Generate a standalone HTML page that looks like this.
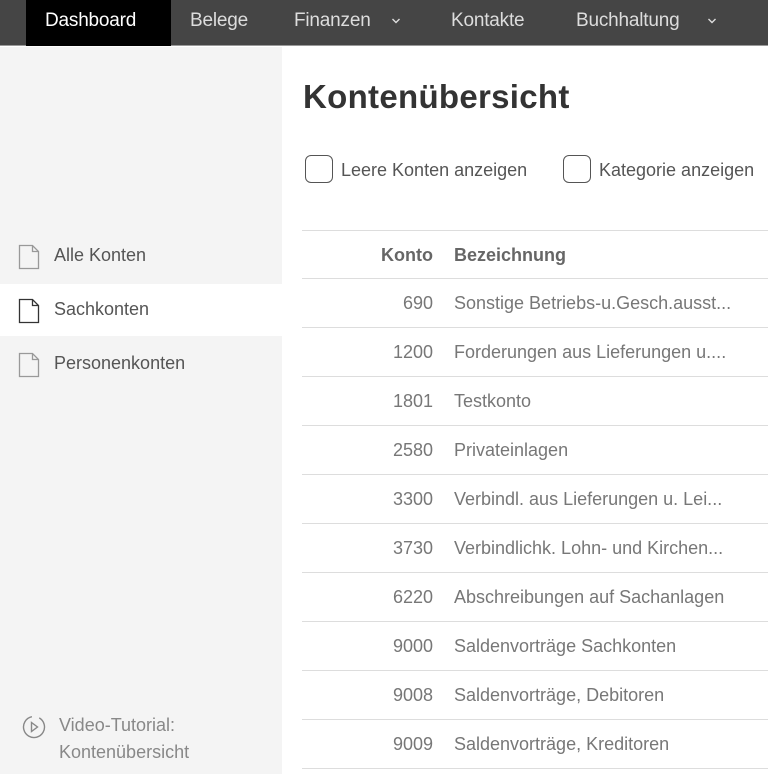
<!DOCTYPE html>
<html><head><meta charset="utf-8"><style>
*{margin:0;padding:0;box-sizing:border-box}
body{width:768px;height:774px;overflow:hidden;font-family:"Liberation Sans",sans-serif;background:#fff;position:relative;color:#555}
.nav{position:absolute;left:0;top:0;width:768px;height:46px;background:#454545;border-bottom:1px solid #999}
.nav span{position:absolute;top:10px;font-size:19px;color:#ddd;letter-spacing:-0.2px}
.nav .act{left:26px;top:0;width:145px;height:46px;background:#000;color:#fff;padding:10px 0 0 19px}
.nav svg{position:absolute;top:17px}
.side{position:absolute;left:0;top:47px;width:282px;height:727px;background:#f4f4f4}
.item{position:absolute;left:0;width:282px;height:52px;font-size:18px;color:#555}
.item svg{position:absolute;left:18px;top:14px}
.item span{position:absolute;left:54px;top:15px}
h1{position:absolute;left:303px;top:78px;font-size:33px;font-weight:bold;color:#333;letter-spacing:0.3px}
.cb{position:absolute;top:155px;width:28px;height:28px;border:1.5px solid #555;border-radius:6px}
.cbl{position:absolute;top:160px;font-size:18px;color:#555}
.line{position:absolute;left:302px;width:466px;height:1px;background:#ddd}
.row{position:absolute;left:302px;width:466px;font-size:18px;color:#777}
.row .k{position:absolute;right:335px;}
.row .b{position:absolute;left:152px;white-space:nowrap}
</style></head><body>
<div class="nav">
<span class="act">Dashboard</span>
<span style="left:190px">Belege</span>
<span style="left:294px">Finanzen</span>
<svg style="left:391px" width="10" height="8" viewBox="0 0 10 8"><path d="M1.5 2l3.5 3.5 3.5-3.5" fill="none" stroke="#ddd" stroke-width="1.4"/></svg>
<span style="left:451px">Kontakte</span>
<span style="left:576px">Buchhaltung</span>
<svg style="left:707px" width="10" height="8" viewBox="0 0 10 8"><path d="M1.5 2l3.5 3.5 3.5-3.5" fill="none" stroke="#ddd" stroke-width="1.4"/></svg>
</div>
<div class="side">
<div class="item" style="top:183px"><svg width="22" height="26" viewBox="0 0 22 26"><path d="M1.5 1.5h13l6 6v17h-19z M14.5 1.5v6h6" fill="none" stroke="#999" stroke-width="1.3"/></svg><span>Alle Konten</span></div>
<div class="item" style="top:237px;background:#fff"><svg width="22" height="26" viewBox="0 0 22 26"><path d="M1.5 1.5h13l6 6v17h-19z M14.5 1.5v6h6" fill="none" stroke="#333" stroke-width="1.3"/></svg><span>Sachkonten</span></div>
<div class="item" style="top:291px"><svg width="22" height="26" viewBox="0 0 22 26"><path d="M1.5 1.5h13l6 6v17h-19z M14.5 1.5v6h6" fill="none" stroke="#999" stroke-width="1.3"/></svg><span>Personenkonten</span></div>
<svg style="position:absolute;left:22px;top:668px" width="24" height="24" viewBox="0 0 24 24"><circle cx="12" cy="12" r="10.5" fill="none" stroke="#888" stroke-width="1.4" stroke-dasharray="58 8" transform="rotate(-60 12 12)"/><path d="M9.5 7.5l6 4.5-6 4.5z" fill="none" stroke="#888" stroke-width="1.4"/></svg>
<div style="position:absolute;left:59px;top:665px;font-size:18px;color:#888;line-height:27px">Video-Tutorial:<br>Kontenübersicht</div>
</div>
<h1>Kontenübersicht</h1>
<div class="cb" style="left:305px"></div><div class="cbl" style="left:341px">Leere Konten anzeigen</div>
<div class="cb" style="left:563px"></div><div class="cbl" style="left:599px">Kategorie anzeigen</div>
<div class="line" style="top:230px"></div>
<div class="row" style="top:245px;font-weight:bold;color:#666"><span class="k">Konto</span><span class="b">Bezeichnung</span></div>
<div class="line" style="top:278px"></div>
<div class="row" style="top:293px"><span class="k">690</span><span class="b">Sonstige Betriebs-u.Gesch.ausst...</span></div>
<div class="line" style="top:327px"></div>
<div class="row" style="top:342px"><span class="k">1200</span><span class="b">Forderungen aus Lieferungen u....</span></div>
<div class="line" style="top:376px"></div>
<div class="row" style="top:391px"><span class="k">1801</span><span class="b">Testkonto</span></div>
<div class="line" style="top:425px"></div>
<div class="row" style="top:440px"><span class="k">2580</span><span class="b">Privateinlagen</span></div>
<div class="line" style="top:474px"></div>
<div class="row" style="top:489px"><span class="k">3300</span><span class="b">Verbindl. aus Lieferungen u. Lei...</span></div>
<div class="line" style="top:523px"></div>
<div class="row" style="top:538px"><span class="k">3730</span><span class="b">Verbindlichk. Lohn- und Kirchen...</span></div>
<div class="line" style="top:572px"></div>
<div class="row" style="top:587px"><span class="k">6220</span><span class="b">Abschreibungen auf Sachanlagen</span></div>
<div class="line" style="top:621px"></div>
<div class="row" style="top:636px"><span class="k">9000</span><span class="b">Saldenvorträge Sachkonten</span></div>
<div class="line" style="top:670px"></div>
<div class="row" style="top:685px"><span class="k">9008</span><span class="b">Saldenvorträge, Debitoren</span></div>
<div class="line" style="top:719px"></div>
<div class="row" style="top:734px"><span class="k">9009</span><span class="b">Saldenvorträge, Kreditoren</span></div>
<div class="line" style="top:768px"></div>
</body></html>
